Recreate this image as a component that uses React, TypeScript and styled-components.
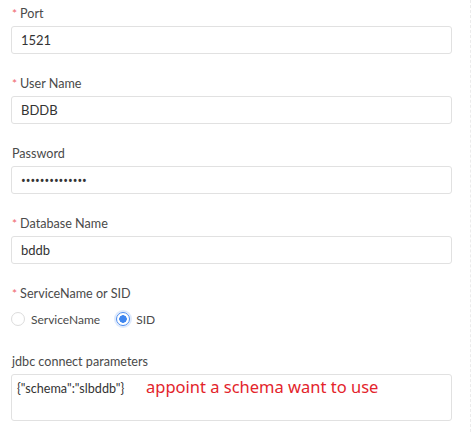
import React from 'react'
import styled, { createGlobalStyle } from 'styled-components'

const GlobalStyle = createGlobalStyle`
  html, body {
    margin: 0;
    padding: 0;
    background: #ffffff;
  }
  body {
    font-family: Lato, 'Noto Sans', sans-serif;
    color: #333;
  }
`

interface FieldProps {
  label: string
  required?: boolean
  children: React.ReactNode
}

const Field: React.FC<FieldProps> = ({ label, required, children }) => (
  <FieldWrap>
    <Label>
      {required && <Star>*</Star>}
      {label}
    </Label>
    {children}
  </FieldWrap>
)

export default function App() {
  return (
    <Page>
      <GlobalStyle />
      <Form>
        <Field label="Port" required>
          <Input defaultValue="1521" />
        </Field>
        <Field label="User Name" required>
          <Input defaultValue="BDDB" />
        </Field>
        <Field label="Password">
          <Input type="password" masked defaultValue="bddbpassword12" />
        </Field>
        <Field label="Database Name" required>
          <Input defaultValue="bddb" />
        </Field>
        <Field label="ServiceName or SID" required>
          <RadioRow>
            <RadioOption>
              <RadioCircle />
              ServiceName
            </RadioOption>
            <RadioOption>
              <RadioCircle checked />
              SID
            </RadioOption>
          </RadioRow>
        </Field>
        <Field label="jdbc connect parameters">
          <TextAreaWrap>
            <TextArea defaultValue={'{"schema":"slbddb"}'} />
            <Note>appoint a schema want to use</Note>
          </TextAreaWrap>
        </Field>
      </Form>
    </Page>
  )
}

const Page = styled.div`
  width: 471px;
  height: 432px;
  border-right: 1px dashed #ececec;
  box-sizing: border-box;
  padding: 2px 0 0 11px;
  overflow: hidden;
`

const Form = styled.div`
  width: 441px;
  display: flex;
  flex-direction: column;
`

const FieldWrap = styled.div`
  display: flex;
  flex-direction: column;
  margin-bottom: 18px;
`

const Label = styled.div`
  height: 24px;
  line-height: 24px;
  font-size: 12.6px;
  color: #4a4a4a;
  padding-left: 1px;
`

const Star = styled.span`
  color: #f0646a;
  margin-right: 3px;
  font-size: 12px;
`

const Input = styled.input<{ masked?: boolean }>`
  box-sizing: border-box;
  width: 100%;
  height: 28px;
  margin: 0;
  padding: 0 9px;
  border: 1px solid #e1e1e1;
  border-radius: 3px;
  font-family: ${p => (p.masked ? "'Noto Sans', sans-serif" : "Lato, 'Noto Sans', sans-serif")};
  font-size: ${p => (p.masked ? '12.5px' : '13px')};
  color: #333;
  background: #fff;
  outline: none;
`

const RadioRow = styled.div`
  height: 26px;
  display: flex;
  align-items: center;
  gap: 16px;
  font-size: 12px;
  color: #4a4a4a;
`

const RadioOption = styled.label`
  display: flex;
  align-items: center;
  gap: 6px;
`

const RadioCircle = styled.span<{ checked?: boolean }>`
  box-sizing: border-box;
  width: 14px;
  height: 14px;
  border-radius: 50%;
  border: 1px solid ${p => (p.checked ? '#4c8df0' : '#dcdcdc')};
  background: ${p => (p.checked ? 'radial-gradient(circle, #3f86ef 0 3.5px, #fff 4px)' : '#fff')};
  box-shadow: ${p => (p.checked ? '0 0 0 2px rgba(76, 141, 240, 0.18)' : 'none')};
`

const TextAreaWrap = styled.div`
  position: relative;
`

const TextArea = styled.textarea`
  box-sizing: border-box;
  display: block;
  width: 100%;
  height: 47px;
  margin: 0;
  padding: 6px 5px;
  border: 1px solid #e1e1e1;
  border-radius: 3px;
  font-family: Lato, 'Noto Sans', sans-serif;
  font-size: 12.6px;
  color: #333;
  resize: none;
  outline: none;
`

const Note = styled.span`
  position: absolute;
  left: 135px;
  top: 1px;
  font-family: 'Noto Sans', 'Open Sans', sans-serif;
  font-size: 16.5px;
  color: #e3242b;
  pointer-events: none;
`
